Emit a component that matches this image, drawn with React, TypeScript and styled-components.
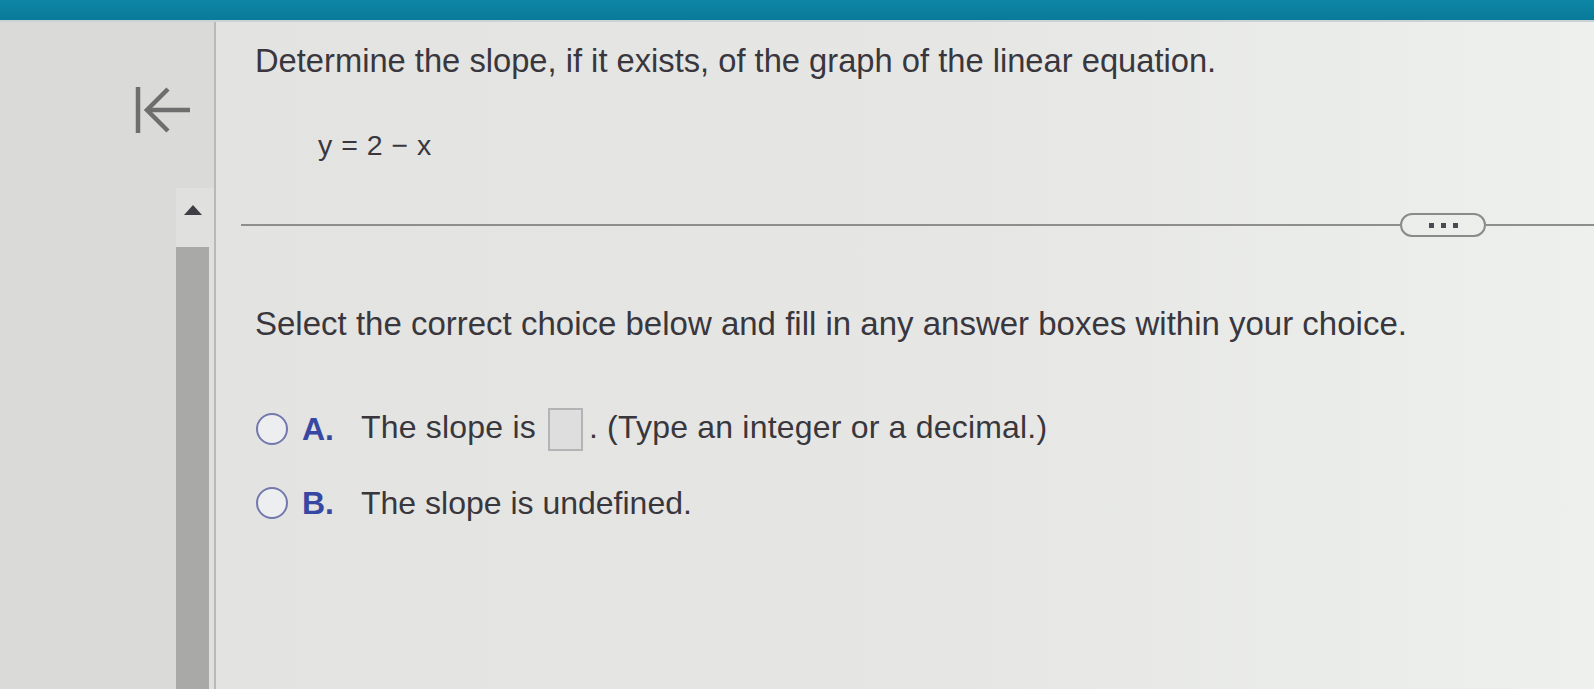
import styled, { createGlobalStyle } from "styled-components";

const GlobalStyle = createGlobalStyle`
  html, body {
    margin: 0;
    padding: 0;
    background: #e4e4e2;
  }
  * { box-sizing: border-box; }
`;

const Page = styled.div`
  width: 1594px;
  height: 689px;
  display: flex;
  flex-direction: column;
  overflow: hidden;
  font-family: "Liberation Sans", Arial, sans-serif;
  color: #39373d;
`;

const TopBar = styled.div`
  height: 22px;
  flex: none;
  background: linear-gradient(180deg, #0e86a6 0%, #0a7a99 100%);
  border-bottom: 2px solid #c9d3d6;
`;

const Body = styled.div`
  flex: 1;
  display: flex;
  min-height: 0;
`;

const Sidebar = styled.div`
  width: 216px;
  flex: none;
  background: #dadad8;
  border-right: 2px solid #b9b9b7;
  display: flex;
  flex-direction: column;
`;

const BackButton = styled.button`
  margin: 62px 0 0 134px;
  width: 60px;
  height: 52px;
  padding: 0;
  border: none;
  background: transparent;
  display: flex;
  align-items: center;
  justify-content: flex-start;
  cursor: pointer;
`;

const ScrollTrack = styled.div`
  margin: 52px 0 0 176px;
  flex: 1;
  background: #e0e0de;
  display: flex;
  flex-direction: column;
  align-items: stretch;
`;

const ScrollArrow = styled.div`
  height: 59px;
  display: flex;
  justify-content: center;
  padding-top: 17px;
  padding-right: 5px;
`;

const ScrollThumb = styled.div`
  flex: 1;
  margin-right: 5px;
  background: #a9a9a8;
`;

const Main = styled.div`
  flex: 1;
  padding: 21px 0 0 25px;
  background: linear-gradient(90deg, #e3e3e1 0%, #e6e7e5 55%, #eef0ee 100%);
  display: flex;
  flex-direction: column;
`;

const Prompt = styled.div`
  padding-left: 14px;
  font-size: 32.7px;
  line-height: 36px;
`;

const Equation = styled.div`
  padding-left: 77px;
  margin-top: 50px;
  font-size: 28.5px;
  line-height: 32px;
  word-spacing: 1px;
`;

const DividerRow = styled.div`
  margin-top: 52px;
  display: flex;
  align-items: center;
`;

const Rule = styled.div<{ $grow?: boolean }>`
  height: 2px;
  background: #8e8e8e;
  flex: ${(p) => (p.$grow ? 1 : "none")};
  width: ${(p) => (p.$grow ? "auto" : "108px")};
`;

const MoreButton = styled.button`
  width: 86px;
  height: 24px;
  flex: none;
  border: 2px solid #8a8a8a;
  border-radius: 12px;
  background: transparent;
  display: flex;
  align-items: center;
  justify-content: center;
  gap: 7px;
  padding: 0;
`;

const Dot = styled.span`
  width: 5px;
  height: 5px;
  background: #4a4a52;
`;

const Instruction = styled.div`
  padding-left: 14px;
  margin-top: 69px;
  font-size: 33px;
  line-height: 36px;
`;

const Choices = styled.div`
  margin-top: 69px;
  padding-left: 15px;
  display: flex;
  flex-direction: column;
  gap: 38px;
`;

const Choice = styled.label`
  display: flex;
  align-items: center;
  height: 36px;
  font-size: 32px;
  line-height: 36px;
`;

const Radio = styled.span`
  width: 32px;
  height: 32px;
  flex: none;
  border-radius: 50%;
  border: 2.5px solid #7378ad;
  background: #eceef0;
`;

const Letter = styled.span`
  width: 59px;
  flex: none;
  margin-left: 14px;
  font-weight: 700;
  color: #3748a3;
`;

const AnswerText = styled.span`
  letter-spacing: 0.2px;
`;

const AnswerBox = styled.span`
  display: inline-block;
  width: 35px;
  height: 43px;
  margin: 0 6px 0 12px;
  border: 2px solid #b4b4b6;
  background: #dddedd;
  vertical-align: middle;
`;

const BackIcon = () => (
  <svg width="58" height="52" viewBox="0 0 58 52" fill="none">
    <line x1="4" y1="3" x2="4" y2="49" stroke="#6e6e6e" strokeWidth="4.5" />
    <line x1="13" y1="26" x2="56" y2="26" stroke="#6e6e6e" strokeWidth="4.5" />
    <polyline
      points="34,5 13,26 34,47"
      stroke="#6e6e6e"
      strokeWidth="4.5"
      strokeLinejoin="miter"
    />
  </svg>
);

const UpArrow = () => (
  <svg width="18" height="10" viewBox="0 0 18 10">
    <polygon points="9,0 18,10 0,10" fill="#3e3e44" />
  </svg>
);

export default function App() {
  return (
    <>
      <GlobalStyle />
      <Page>
        <TopBar />
        <Body>
          <Sidebar>
            <BackButton aria-label="Back">
              <BackIcon />
            </BackButton>
            <ScrollTrack>
              <ScrollArrow>
                <UpArrow />
              </ScrollArrow>
              <ScrollThumb />
            </ScrollTrack>
          </Sidebar>
          <Main>
            <Prompt>Determine the slope, if it exists, of the graph of the linear equation.</Prompt>
            <Equation>y = 2 − x</Equation>
            <DividerRow>
              <Rule $grow />
              <MoreButton aria-label="More">
                <Dot />
                <Dot />
                <Dot />
              </MoreButton>
              <Rule />
            </DividerRow>
            <Instruction>
              Select the correct choice below and fill in any answer boxes within your choice.
            </Instruction>
            <Choices>
              <Choice>
                <Radio />
                <Letter>A.</Letter>
                <AnswerText>
                  The slope is
                  <AnswerBox />. (Type an integer or a decimal.)
                </AnswerText>
              </Choice>
              <Choice>
                <Radio />
                <Letter>B.</Letter>
                <span>The slope is undefined.</span>
              </Choice>
            </Choices>
          </Main>
        </Body>
      </Page>
    </>
  );
}
